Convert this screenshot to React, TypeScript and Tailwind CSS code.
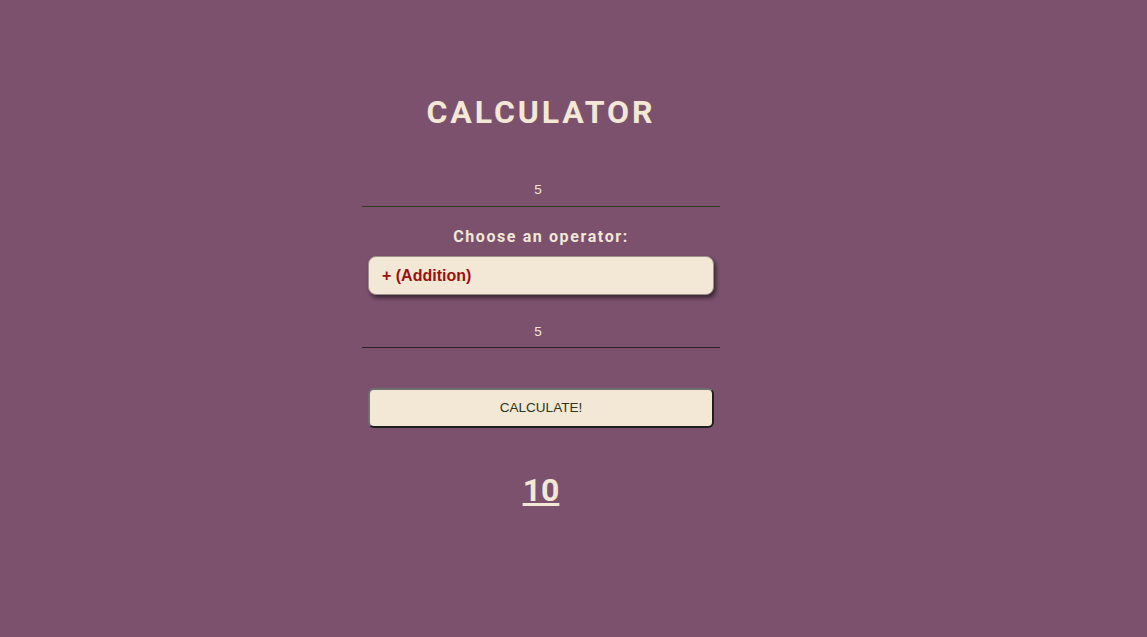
import React, { useState } from "react";

export default function App() {
  const [a, setA] = useState("5");
  const [b, setB] = useState("5");
  const [op, setOp] = useState("+");
  const [result, setResult] = useState(10);

  const calc = () => {
    const x = parseFloat(a);
    const y = parseFloat(b);
    let r = 0;
    if (op === "+") r = x + y;
    else if (op === "-") r = x - y;
    else if (op === "*") r = x * y;
    else r = x / y;
    setResult(r);
  };

  return (
    <div className="min-h-[637px] w-full bg-[#7c516e] font-['Roboto',sans-serif]">
      <div className="ml-[362px] flex w-[358px] flex-col items-center pt-[93px]">
        <h1 className="text-[32px] font-bold leading-[38px] tracking-[2.9px] text-[#f2e8d5]">
          CALCULATOR
        </h1>

        <input
          value={a}
          onChange={(e) => setA(e.target.value)}
          className="mt-[42px] h-[34px] w-[358px] border-b border-[#2f3d1f] bg-transparent pb-[2px] pr-[6px] pt-[1px] text-center font-['Liberation_Sans',sans-serif] text-[13.5px] text-[#f2e8d5] outline-none"
        />

        <label className="mt-[20px] text-[16px] font-bold leading-[20px] tracking-[1.6px] text-[#f2e8d5]">
          Choose an operator:
        </label>

        <div className="mt-[9px] flex h-[39px] w-[346px] items-center rounded-[8px] border border-[#9a9188] bg-[#f2e8d5] px-[13px] shadow-[2px_3px_4px_rgba(0,0,0,0.55)]">
          <select
            value={op}
            onChange={(e) => setOp(e.target.value)}
            className="w-full appearance-none bg-transparent font-['Liberation_Sans',sans-serif] text-[16px] font-bold text-[#9b1111] outline-none"
          >
            <option value="+">+ (Addition)</option>
            <option value="-">- (Subtraction)</option>
            <option value="*">* (Multiplication)</option>
            <option value="/">/ (Division)</option>
          </select>
        </div>

        <input
          value={b}
          onChange={(e) => setB(e.target.value)}
          className="mt-[18px] h-[35px] w-[358px] border-b border-[#2b2226] bg-transparent pb-[1px] pr-[6px] pt-[4px] text-center font-['Liberation_Sans',sans-serif] text-[13.5px] text-[#f2e8d5] outline-none"
        />

        <button
          onClick={calc}
          className="mt-[40px] h-[40px] w-[346px] rounded-[6px] border-2 border-b-[#1f1f1f] border-l-[#707070] border-r-[#1f1f1f] border-t-[#707070] bg-[#f2e8d5] font-['Liberation_Sans',sans-serif] text-[13.5px] text-[#2d3520]"
        >
          CALCULATE!
        </button>

        <div className="mt-[43px] text-[32px] font-bold leading-[38px] text-[#f2e8d5] underline decoration-[3px] underline-offset-[2px]">
          {result}
        </div>
      </div>
    </div>
  );
}
